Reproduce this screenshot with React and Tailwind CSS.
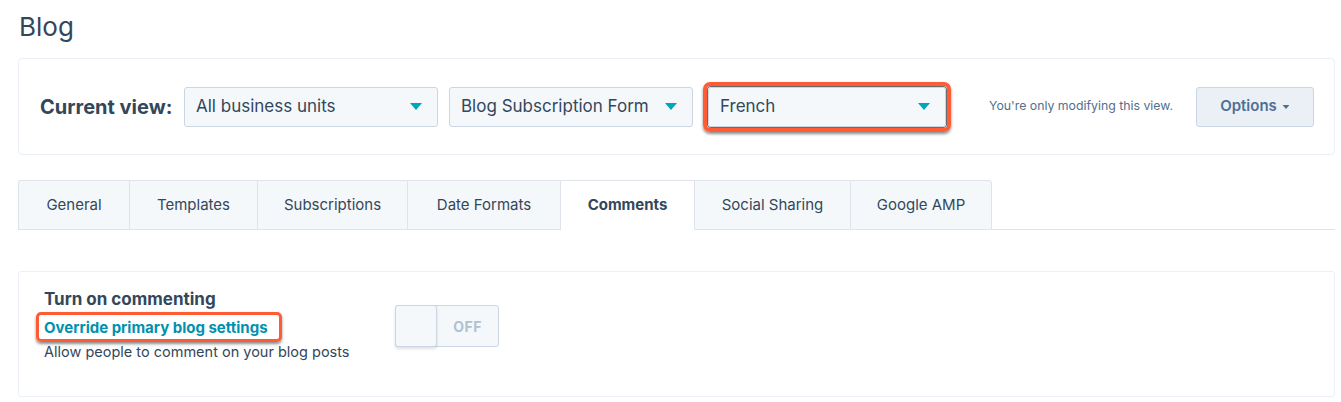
import React from "react";

const font = { fontFamily: "Inter, 'Noto Sans', sans-serif" };

function Caret({ className }) {
    return (
        <svg viewBox="0 0 12 7" className={className}>
            <path d="M0 0 H12 L6 7 Z" fill="currentColor" />
        </svg>
    );
}

function Select({ label, width }) {
    return (
        <div className={`flex items-center justify-between h-[40px] ${width} pl-[11px] pr-[15px] bg-[#f5f8fa] border border-[#cbd6e2] rounded-[3px] text-[17px] text-[#33475b]`}>
            <span>{label}</span>
            <Caret className="w-[12px] h-[7px] text-[#00a4bd]" />
        </div>
    );
}

const tabs = [
    { name: "General", w: "w-[111px]" },
    { name: "Templates", w: "w-[128px]" },
    { name: "Subscriptions", w: "w-[150px]" },
    { name: "Date Formats", w: "w-[153px]" },
    { name: "Comments", w: "w-[134px]", active: true },
    { name: "Social Sharing", w: "w-[156px]" },
    { name: "Google AMP", w: "w-[142px]", last: true },
];

export default function App() {
    return (
        <div className="w-full h-[402px] bg-white px-[18px] overflow-hidden" style={font}>
            <div className="h-[58px] pt-[10px]">
                <h1 className="text-[26px] leading-[34px] text-[#33475b] pl-[1px]">Blog</h1>
            </div>

            {/* view selector */}
            <section className="w-[1317px] h-[97px] border border-[#eaf0f6] rounded-[4px] flex items-center pl-[21px] pr-[20px]">
                <span className="text-[20px] font-bold text-[#33475b] w-[144px]">Current view:</span>
                <Select label="All business units" width="w-[254px]" />
                <div className="ml-[11px]">
                    <Select label="Blog Subscription Form" width="w-[244px]" />
                </div>
                <div className="ml-[10px] p-[1px] border-[4px] border-[#ff5c35] rounded-[7px] shadow-[0_2px_3px_rgba(0,0,0,0.45)]">
                    <div className="rounded-[3px] ring-1 ring-[#6b6b6b]">
                        <Select label="French" width="w-[238px]" />
                    </div>
                </div>
                <span className="ml-[38px] text-[12.3px] text-[#516f90]">You're only modifying this view.</span>
                <button className="ml-auto flex items-center justify-center gap-[5px] w-[118px] h-[40px] bg-[#eaf0f6] border border-[#cbd6e2] rounded-[3px] text-[15px] font-semibold text-[#506e91]">
                    Options
                    <Caret className="w-[8px] h-[4px]" />
                </button>
            </section>

            {/* tabs */}
            <nav className="mt-[25px] flex h-[50px] w-[1317px]">
                {tabs.map(tab => (
                    <div
                        key={tab.name}
                        className={`${tab.w} h-[50px] flex items-center justify-center text-[15px] border-t border-l border-[#dfe3eb] ${tab.last ? "border-r rounded-tr-[3px]" : ""} ${tab.name === "General" ? "rounded-tl-[3px]" : ""} ${tab.active ? "bg-white font-bold text-[#33475b]" : "bg-[#f5f8fa] border-b text-[#33475b]"}`}
                    >
                        {tab.name}
                    </div>
                ))}
                <div className="flex-1 border-b border-[#dfe3eb]" />
            </nav>

            {/* comments settings */}
            <section className="mt-[41px] w-[1317px] h-[126px] border border-[#eaf0f6] rounded-[3px] flex items-start pl-[25px] pt-[17px]">
                <div className="w-[351px] text-[#33475b]">
                    <p className="text-[17px] leading-[20px] font-bold">Turn on commenting</p>
                    <div className="inline-block -ml-[8px] mt-[3px] pl-[5px] pr-[11px] border-[3px] border-[#ff5c35] rounded-[5px] shadow-[0_2px_3px_rgba(0,0,0,0.45)]">
                        <a href="#" className="text-[15px] leading-[22px] font-bold text-[#0091ae]">Override primary blog settings</a>
                    </div>
                    <p className="text-[14.5px] leading-[20px]">Allow people to comment on your blog posts</p>
                </div>
                <div className="mt-[16px] flex w-[104px] h-[42px] border border-[#cbd6e2] rounded-[3px] bg-[#f5f8fa]">
                    <div className="w-[42px] -ml-[1px] -my-[1px] h-[42px] bg-[#f5f8fa] border border-[#cbd6e2] rounded-[3px] shadow-[0_2px_3px_rgba(0,0,0,0.12)]" />
                    <span className="flex-1 flex items-center justify-center text-[14px] font-bold tracking-[0.5px] text-[#b0c1d4]">OFF</span>
                </div>
            </section>
        </div>
    );
}
